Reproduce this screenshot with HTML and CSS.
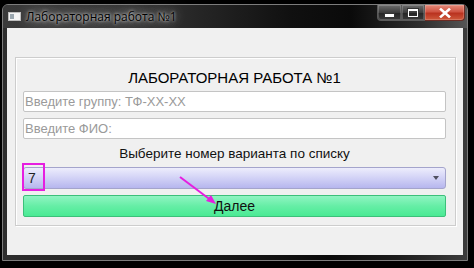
FILE: index.html
```html
<!DOCTYPE html>
<html lang="ru">
<head>
    <meta charset="UTF-8">
    <title>Лабораторная работа №1</title>
    <link rel="stylesheet" href="styles.css">
</head>
<body>
    <div class="window">
        <div class="titlebar">
            <svg class="app-icon" width="13" height="9" viewBox="0 0 13 9">
                <rect x="0.5" y="0.5" width="12" height="8" fill="#f4f4f4" stroke="#bdbdbd"/>
                <rect x="2" y="2" width="4" height="5" fill="#9aa6ae"/>
            </svg>
            <span class="title">Лабораторная работа №1</span>
            <div class="caption-buttons">
                <div class="cap-btn cap-min"><span class="min-glyph"></span></div>
                <div class="cap-btn cap-max"><span class="max-glyph"></span></div>
                <div class="cap-btn cap-close">
                    <svg width="12" height="10" viewBox="0 0 12 10">
                        <path d="M2 1.5 L10 8.5 M10 1.5 L2 8.5" stroke="#fff" stroke-width="2.6" stroke-linecap="square"/>
                    </svg>
                </div>
            </div>
        </div>
        <div class="client">
            <div class="group">
                <div class="heading">ЛАБОРАТОРНАЯ РАБОТА №1</div>
                <input class="field" type="text" placeholder="Введите группу: ТФ-XX-XX">
                <input class="field field-second" type="text" placeholder="Введите ФИО:">
                <div class="caption">Выберите номер варианта по списку</div>
                <div class="combo">
                    <span class="combo-value">7</span>
                    <span class="combo-arrow"></span>
                </div>
                <button class="next-btn">Далее</button>
            </div>
        </div>
    </div>

    <!-- annotations drawn over the screenshot -->
    <div class="mark-box"></div>
    <svg class="mark-arrow" width="50" height="40" viewBox="0 0 50 40">
        <path d="M5 7 L37 31" stroke="#e61ee0" stroke-width="2" fill="none"/>
        <path d="M41 34 L31 31 L36 25 Z" fill="#e61ee0"/>
    </svg>
</body>
</html>
```

FILE: styles.css
```css
body {
    margin: 0;
    background-color: #000;
    font-family: "Liberation Sans", Arial, sans-serif;
    position: relative;
    height: 268px;
    overflow: hidden;
}
.window {
    margin: 4px 0 0 2px;
    width: 466px;
    height: 257px;
    box-sizing: border-box;
    border: 1px solid #7c7c7c;
    border-radius: 6px 6px 0 0;
    padding: 0 4px 5px 4px;
    background: linear-gradient(90deg, #2e2e2e 0, #1e1e1e 40%, #0a0a0a 70%, #1c1c1c 85%, #3c3c3c 100%);
    display: flex;
    flex-direction: column;
}
.titlebar {
    height: 23px;
    display: flex;
    align-items: center;
    background: linear-gradient(90deg, #3a3a3a 0, #333 30%, #101010 62%, #0a0a0a 75%, #2e2e2e 90%, #555 100%);
    margin: 0 -4px;
    padding: 0 4px;
    border-radius: 5px 5px 0 0;
}
.app-icon {
    margin-left: 1px;
    flex: none;
}
.title {
    margin-left: 5px;
    font-family: "Open Sans", "Liberation Sans", sans-serif;
    font-size: 12px;
    color: #000;
    text-shadow: 0 0 3px rgba(255, 255, 255, 0.9), 0 0 10px rgba(220, 220, 220, 0.8), 0 0 16px rgba(200, 200, 200, 0.7);
}
.caption-buttons {
    margin-left: auto;
    margin-right: -2px;
    align-self: flex-start;
    display: flex;
}
.cap-btn {
    height: 16px;
    box-sizing: border-box;
    border: 1px solid #5a5a5a;
    border-top: none;
    display: flex;
    align-items: center;
    justify-content: center;
    box-shadow: inset 0 0 0 1px rgba(255, 255, 255, 0.18);
}
.cap-min {
    width: 25px;
    border-radius: 0 0 0 4px;
    background: linear-gradient(#6c6c6c, #3c3c3c 50%, #262626 55%, #3a3a3a);
}
.cap-max {
    width: 23px;
    border-left: none;
    background: linear-gradient(#6c6c6c, #3c3c3c 50%, #262626 55%, #3a3a3a);
}
.cap-close {
    width: 40px;
    border-left: none;
    border-color: #6b2a22;
    border-radius: 0 0 4px 0;
    background: linear-gradient(#e48a7a, #cf5443 45%, #b9321f 55%, #cf5a3c);
}
.min-glyph {
    width: 9px;
    height: 3px;
    margin-top: 5px;
    background-color: #fff;
    border: 1px solid #333;
}
.max-glyph {
    width: 8px;
    height: 5px;
    border: 1px solid #fff;
    border-top-width: 2px;
    outline: 1px solid #333;
}
.client {
    flex: 1;
    background-color: #f0f0f0;
    padding: 29px 7px 0 8px;
}
.group {
    border: 1px solid #cdcdcd;
    box-shadow: 1px 1px 0 #fff inset, 1px 1px 0 #fff;
    padding: 10px 9px 8px 7px;
    display: flex;
    flex-direction: column;
}
.heading {
    font-size: 15px;
    line-height: 20px;
    text-align: center;
    color: #000;
}
.field {
    margin: 3px 0 0 0;
    height: 21px;
    box-sizing: border-box;
    border: 1px solid #c4c4c4;
    border-radius: 2px;
    background-color: #fff;
    padding: 0 1px;
    font-family: "Liberation Sans", Arial, sans-serif;
    font-size: 13px;
}
.field::placeholder {
    color: #9a9a9a;
}
.field-second {
    margin-top: 6px;
}
.caption {
    margin-top: 5px;
    font-size: 13.5px;
    line-height: 19px;
    text-align: center;
    color: #111;
}
.combo {
    margin-top: 4px;
    height: 22px;
    box-sizing: border-box;
    border: 1px solid #a4a4cc;
    border-radius: 3px;
    background: linear-gradient(#ededfc, #d2d2f6 50%, #b6b6ee);
    display: flex;
    align-items: center;
    padding: 0 6px 0 4px;
}
.combo-value {
    font-size: 14px;
    color: #222;
}
.combo-arrow {
    margin-left: auto;
    width: 0;
    height: 0;
    border-left: 3px solid transparent;
    border-right: 3px solid transparent;
    border-top: 4px solid #505060;
}
.next-btn {
    margin-top: 6px;
    height: 22px;
    border: 1px solid #3cc07a;
    border-radius: 2px;
    background: linear-gradient(#90f4c2, #66eea6 50%, #4aea94);
    font-family: "Liberation Sans", Arial, sans-serif;
    font-size: 14px;
    color: #111;
    padding: 0;
}
.mark-box {
    position: absolute;
    left: 22px;
    top: 163px;
    width: 23px;
    height: 28px;
    box-sizing: border-box;
    border: 2px solid #e61ee0;
}
.mark-arrow {
    position: absolute;
    left: 175px;
    top: 170px;
}
```
